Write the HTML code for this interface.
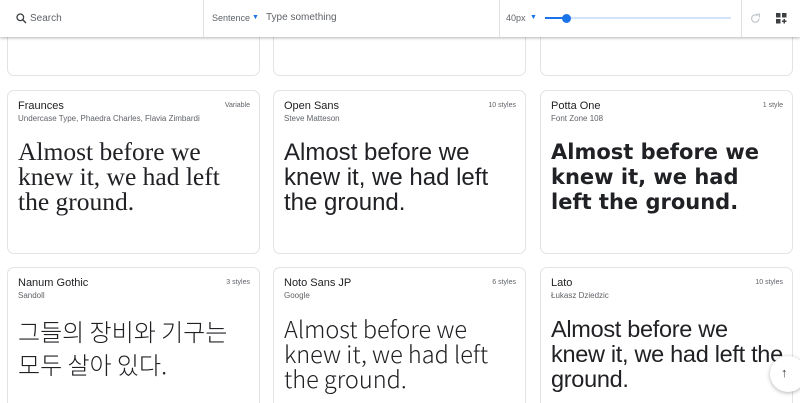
<!DOCTYPE html>
<html><head><style>
*{margin:0;padding:0;box-sizing:border-box}
html,body{width:800px;height:403px;overflow:hidden}
body{background:#fff;font-family:"Liberation Sans",sans-serif;color:#202124;position:relative}
.hdr{position:absolute;left:0;top:0;width:800px;height:37px;background:#fff;box-shadow:0 1px 3px rgba(0,0,0,.3);z-index:5;font-size:10px;color:#5f6368}
.div{position:absolute;top:0;height:37px;border-left:1px solid #e0e0e0}
.card{position:absolute;border:1px solid #e3e3e3;border-radius:7px;background:#fff;width:253px;overflow:hidden}
.nm{position:absolute;left:10px;top:9px;font-size:11px;color:#202124}
.au{position:absolute;left:10px;top:23px;font-size:8px;color:#5f6368}
.st{position:absolute;right:9px;top:11px;font-size:7px;color:#5f6368}
.sm{position:absolute;left:10px;top:49px;font-size:24px;line-height:25px;color:#202124;white-space:nowrap}
</style></head><body>
<div class="hdr">
<svg style="position:absolute;left:16px;top:13px" width="11" height="11" viewBox="0 0 11 11"><circle cx="4.3" cy="4.3" r="3.3" fill="none" stroke="#3c4043" stroke-width="1.3"/><path d="M6.8 6.8L10 10" stroke="#3c4043" stroke-width="1.4"/></svg>
<span style="position:absolute;left:30px;top:13px">Search</span>
<div class="div" style="left:203px"></div>
<span style="position:absolute;left:212px;top:13px;font-size:9px">Sentence</span>
<span style="position:absolute;left:252px;top:14px;font-size:7px;color:#1a73e8">▼</span>
<span style="position:absolute;left:266px;top:12px">Type something</span>
<div class="div" style="left:499px"></div>
<span style="position:absolute;left:506px;top:13px;font-size:9px">40px</span>
<span style="position:absolute;left:530px;top:14px;font-size:7px;color:#1a73e8">▼</span>
<div style="position:absolute;left:545px;top:17px;width:186px;height:2px;background:#d2e3fc"></div>
<div style="position:absolute;left:545px;top:17px;width:21px;height:2px;background:#1a73e8"></div>
<div style="position:absolute;left:562px;top:14px;width:9px;height:9px;border-radius:50%;background:#1a73e8"></div>
<div class="div" style="left:741px"></div>
<svg style="position:absolute;left:750px;top:13px" width="11" height="11" viewBox="0 0 11 11"><path d="M9 5.5A3.7 3.7 0 1 1 7.7 2.7" fill="none" stroke="#bdc1c6" stroke-width="1.1"/><path d="M6.5 1.2h3v3" fill="none" stroke="#bdc1c6" stroke-width="1.1"/></svg>
<svg style="position:absolute;left:776px;top:13px" width="11" height="11" viewBox="0 0 11 11" fill="#3c4043"><rect x="0" y="0" width="4.5" height="4.5"/><rect x="6" y="0" width="4.5" height="4.5"/><rect x="0" y="6" width="4.5" height="4.5"/><path d="M7.5 6h1.5v1.5h1.5v1.5h-1.5v1.5h-1.5v-1.5h-1.5v-1.5h1.5z"/></svg>
</div>

<div class="card" style="left:7px;top:20px;height:56px"></div>
<div class="card" style="left:273px;top:20px;height:56px"></div>
<div class="card" style="left:540px;top:20px;height:56px"></div>

<div class="card" style="left:7px;top:90px;height:164px"><div class="nm">Fraunces</div><div class="au">Undercase Type, Phaedra Charles, Flavia Zimbardi</div><div class="st">Variable</div><div class="sm" style="font-family:'Liberation Serif',serif;font-size:25.5px;top:48px">Almost before we<br>knew it, we had left<br>the ground.</div></div>
<div class="card" style="left:273px;top:90px;height:164px"><div class="nm">Open Sans</div><div class="au">Steve Matteson</div><div class="st">10 styles</div><div class="sm" style="font-family:'Liberation Sans',sans-serif;font-size:24px">Almost before we<br>knew it, we had left<br>the ground.</div></div>
<div class="card" style="left:540px;top:90px;height:164px"><div class="nm">Potta One</div><div class="au">Font Zone 108</div><div class="st">1 style</div><div class="sm" style="font-family:'DejaVu Sans',sans-serif;font-weight:bold;font-size:21px">Almost before we<br>knew it, we had<br>left the ground.</div></div>

<div class="card" style="left:7px;top:267px;height:150px"><div class="nm">Nanum Gothic</div><div class="au">Sandoll</div><div class="st">3 styles</div><div class="sm" style="font-family:'Noto Sans CJK KR',sans-serif;font-weight:300;font-size:24px;line-height:33px;top:46px">그들의 장비와 기구는<br>모두 살아 있다.</div></div>
<div class="card" style="left:273px;top:267px;height:150px"><div class="nm">Noto Sans JP</div><div class="au">Google</div><div class="st">6 styles</div><div class="sm" style="font-family:'Noto Sans CJK JP',sans-serif;font-weight:300;font-size:23.5px;top:48px">Almost before we<br>knew it, we had left<br>the ground.</div></div>
<div class="card" style="left:540px;top:267px;height:150px"><div class="nm">Lato</div><div class="au">Łukasz Dziedzic</div><div class="st">10 styles</div><div class="sm" style="font-family:'Liberation Sans',sans-serif;font-size:23.5px;letter-spacing:-0.3px">Almost before we<br>knew it, we had left the<br>ground.</div></div>

<div style="position:absolute;left:770px;top:356px;width:36px;height:36px;border-radius:50%;background:#fff;box-shadow:0 1px 4px rgba(0,0,0,.3);z-index:6"><span style="position:absolute;left:11px;top:9px;font-size:13px;color:#3c4043">↑</span></div>
</body></html>
